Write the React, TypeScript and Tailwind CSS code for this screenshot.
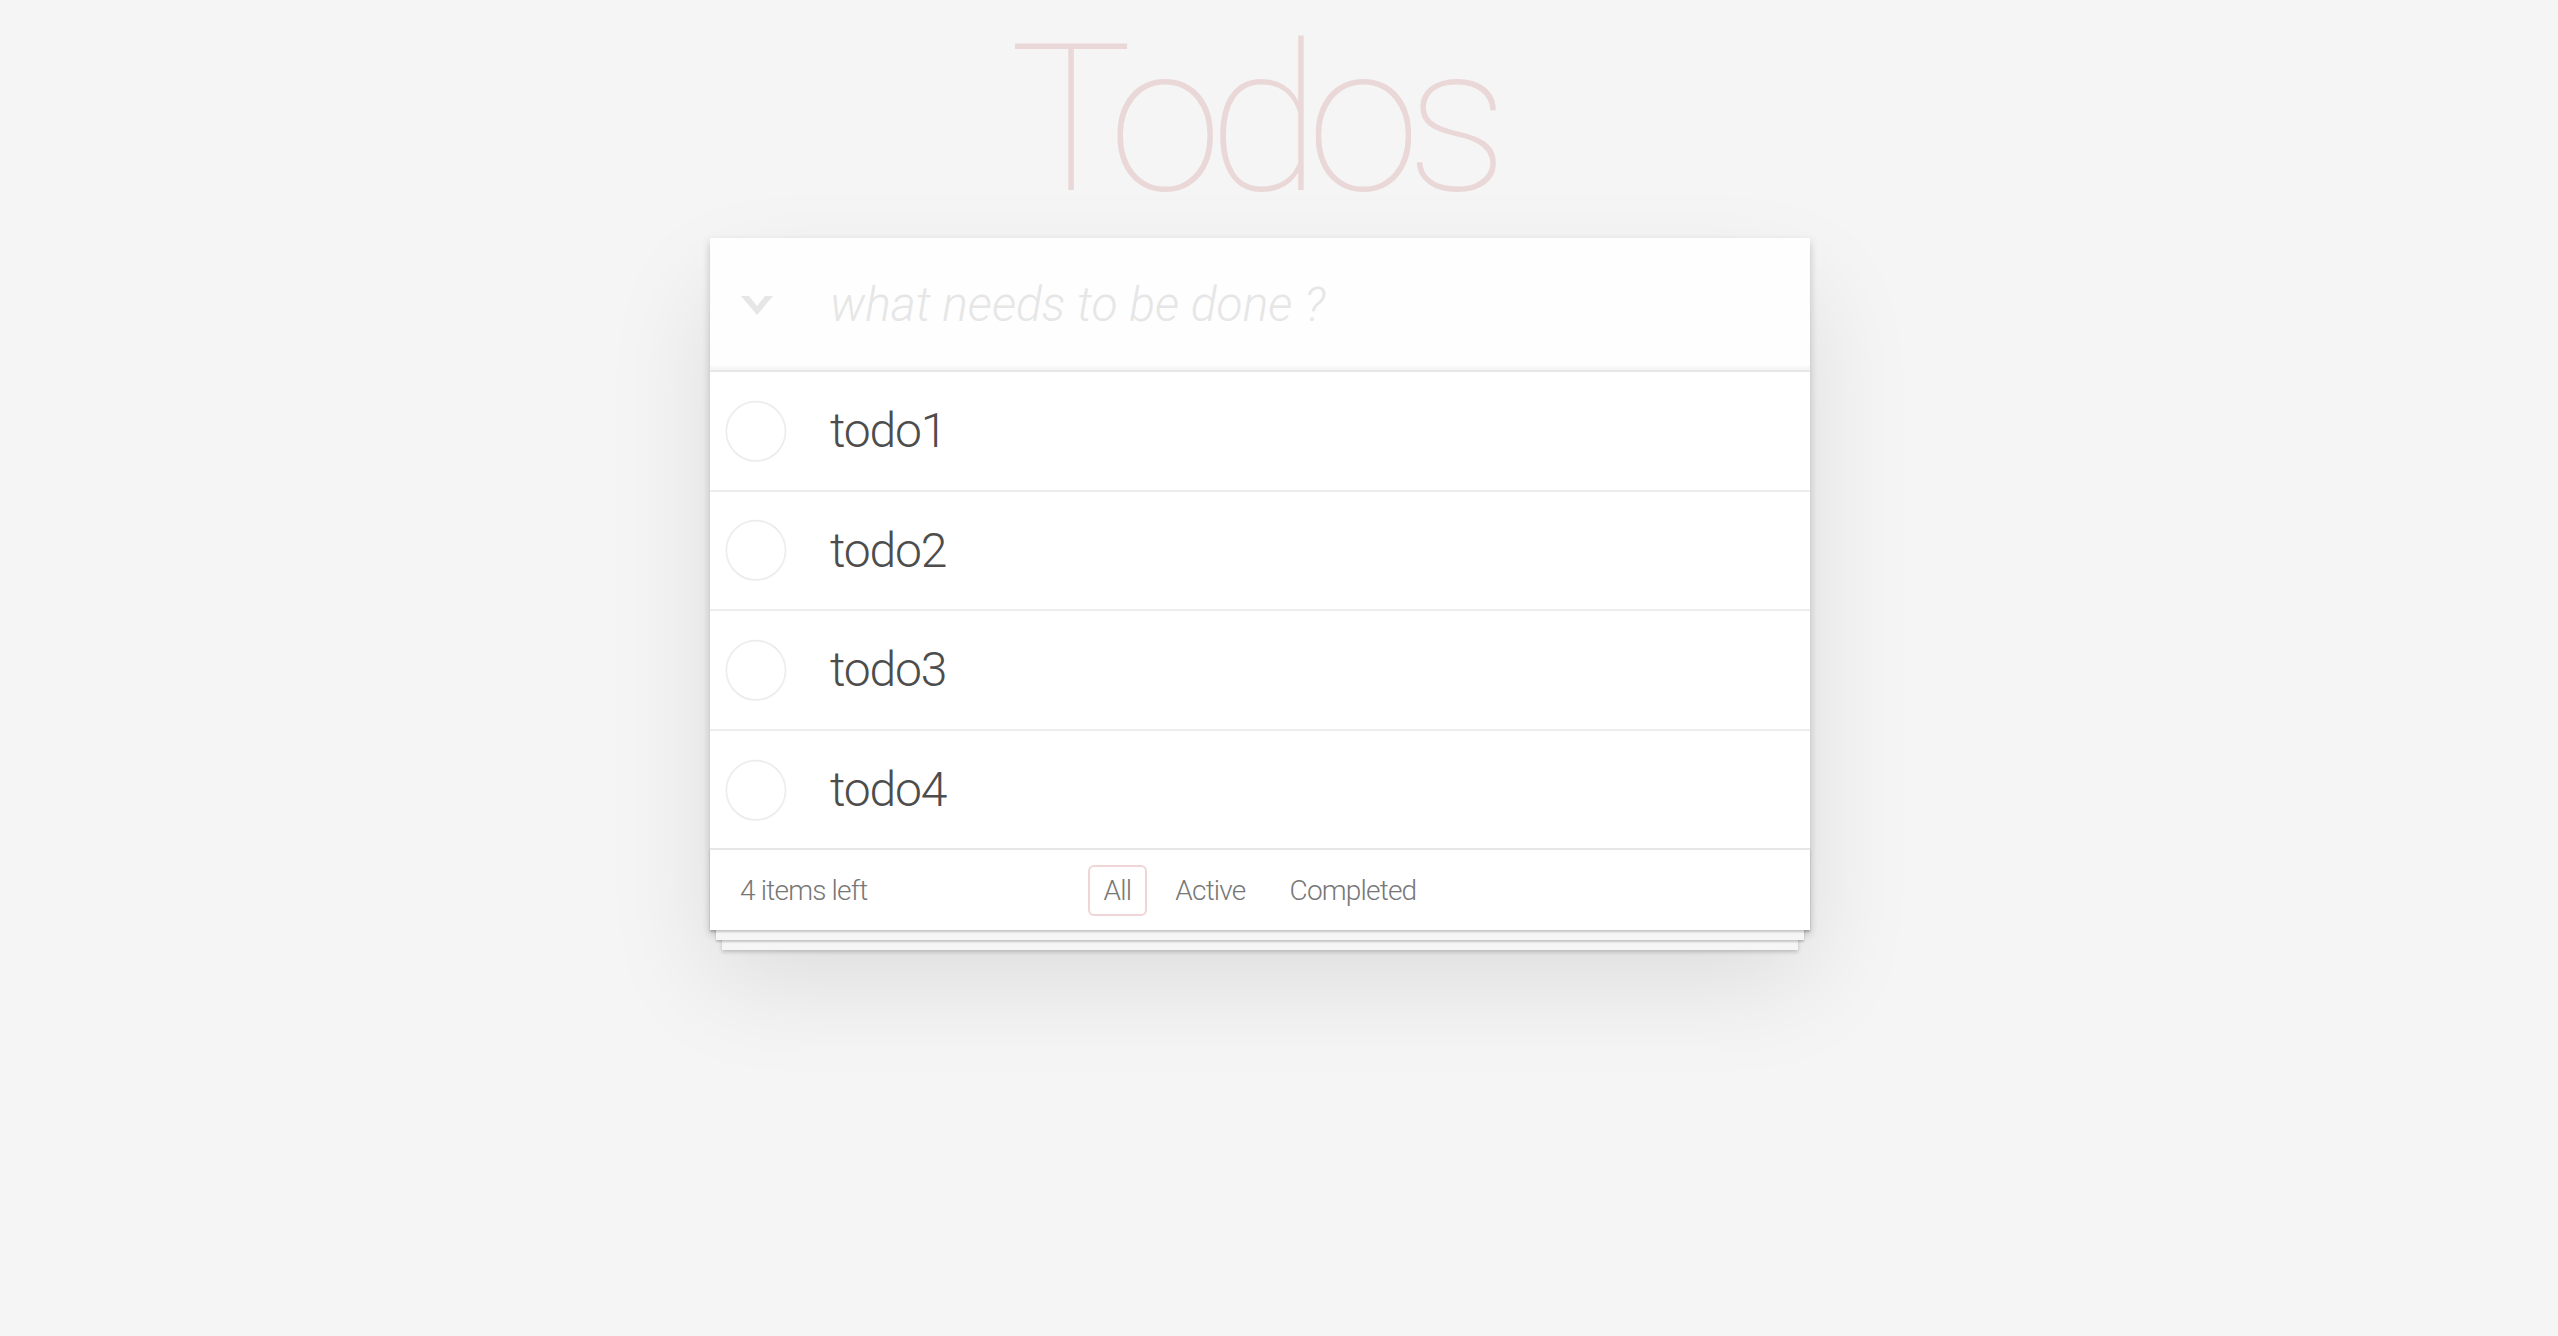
const todos = ["todo1", "todo2", "todo3", "todo4"];
const filters = ["All", "Active", "Completed"];

function Chevron() {
  return (
    <svg width="32" height="20" viewBox="0 0 32 20">
      <polygon points="0,0 8,0 16,10 24,0 32,0 16,19" fill="#e6e6e6" />
    </svg>
  );
}

function Circle() {
  return (
    <svg width="80" height="80" viewBox="-10 -18 100 135">
      <circle cx="50" cy="50" r="50" fill="none" stroke="#ededed" strokeWidth="3" />
    </svg>
  );
}

export default function App() {
  return (
    <div className="min-h-screen bg-[#f5f5f5] font-[family-name:Roboto,'Liberation_Sans',sans-serif] font-light text-[#4d4d4d]">
      <div className="flex flex-col items-center pt-[17px] pr-[38px]">
        <h1 className="h-[206px] pr-[16px] text-center text-[206px] leading-none font-thin tracking-[-14px] text-[rgba(175,47,47,0.15)]">
          Todos
        </h1>

        <section className="mt-[15px] w-[1100px] bg-white shadow-[0_4px_8px_0_rgba(0,0,0,0.2),0_50px_100px_0_rgba(0,0,0,0.1)]">
          <header className="flex h-[132px] items-center bg-[rgba(0,0,0,0.003)] shadow-[inset_0_-4px_2px_rgba(0,0,0,0.03)]">
            <div className="mt-[4px] flex w-[94px] justify-center">
              <Chevron />
            </div>
            <input
              className="ml-[26px] flex-1 bg-transparent pr-[32px] text-[48px] leading-[67px] font-light text-[#4d4d4d] outline-none placeholder:text-[#e6e6e6] placeholder:italic placeholder:font-light"
              placeholder="what needs to be done ?"
            />
          </header>

          <ul className="border-t-2 border-[#e6e6e6]">
            {todos.map((t, i) => (
              <li
                key={t}
                className={
                  "flex items-center " + (i < todos.length - 1 ? "border-b-2 border-[#ededed]" : "")
                }
              >
                <div className="flex w-[80px] justify-center">
                  <Circle />
                </div>
                <label className="py-[30px] pl-[40px] text-[48px] leading-[57.6px] tracking-[-1.2px]">{t}</label>
              </li>
            ))}
          </ul>

          <footer className="grid h-[82px] grid-cols-[1fr_auto_1fr] items-center border-t-2 border-[#e6e6e6] px-[30px] text-[28px] leading-[39px] tracking-[-0.8px] text-[#777] shadow-[0_2px_2px_rgba(0,0,0,0.2),0_16px_0_-6px_#f6f6f6,0_18px_2px_-6px_rgba(0,0,0,0.2),0_32px_0_-12px_#f6f6f6,0_34px_4px_-12px_rgba(0,0,0,0.2)]">
            <span>4 items left</span>
            <ul className="flex">
              {filters.map((f) => (
                <li key={f}>
                  <a
                    href="#"
                    className={
                      "m-[6px] block rounded-[6px] border-2 px-[14px] py-[4px] " +
                      (f === "All" ? "border-[rgba(175,47,47,0.2)]" : "border-transparent")
                    }
                  >
                    {f}
                  </a>
                </li>
              ))}
            </ul>
            <span />
          </footer>
        </section>
      </div>
    </div>
  );
}
